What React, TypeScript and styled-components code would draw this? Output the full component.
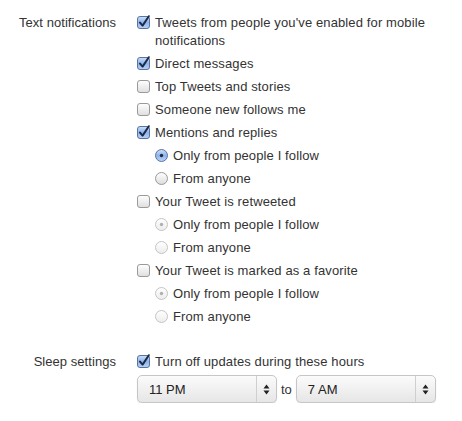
import React from "react";
import styled, { createGlobalStyle } from "styled-components";

const GlobalStyle = createGlobalStyle`
  html, body {
    margin: 0;
    padding: 0;
    background: #ffffff;
  }
  body {
    font-family: "Liberation Sans", Arial, Helvetica, sans-serif;
    font-size: 13px;
    color: #333333;
  }
`;

const Page = styled.div`
  width: 462px;
  padding-top: 14px;
`;

const Section = styled.div<{ $top?: number }>`
  display: grid;
  grid-template-columns: 116px 1fr;
  column-gap: 21px;
  margin-top: ${(p) => p.$top || 0}px;
`;

const Label = styled.div`
  text-align: right;
  line-height: 18px;
  color: #333333;
  letter-spacing: 0.05px;
`;

const List = styled.div`
  display: flex;
  flex-direction: column;
  gap: 5px;
`;

const Row = styled.label<{ $indent?: boolean }>`
  display: flex;
  align-items: flex-start;
  gap: 5px;
  line-height: 18px;
  padding-left: ${(p) => (p.$indent ? 18 : 0)}px;
  padding-right: 10px;
`;

const Mark = styled.span`
  flex: none;
  width: 13px;
  height: 13px;
  margin-top: 2px;
  display: block;
`;

function Checkbox({ checked }: { checked?: boolean }) {
  return (
    <Mark>
      <svg width="14" height="14" viewBox="0 0 14 14" style={{ overflow: "visible" }}>
        <defs>
          <linearGradient id="cbOff" x1="0" y1="0" x2="0" y2="1">
            <stop offset="0" stopColor="#ffffff" />
            <stop offset="1" stopColor="#dedede" />
          </linearGradient>
          <linearGradient id="cbOn" x1="0" y1="0" x2="0" y2="1">
            <stop offset="0" stopColor="#cfe0f7" />
            <stop offset="0.5" stopColor="#8fb4ec" />
            <stop offset="1" stopColor="#b9d3f6" />
          </linearGradient>
        </defs>
        <rect
          x="0.5"
          y="0.5"
          width="12"
          height="12"
          rx="2.5"
          fill={checked ? "url(#cbOn)" : "url(#cbOff)"}
          stroke={checked ? "#5a74a0" : "#9a9a9a"}
        />
        {checked && (
          <path
            d="M3 6.6 L5.6 9.6 L11.8 0.2"
            fill="none"
            stroke="#1c2b4a"
            strokeWidth="2"
            strokeLinecap="round"
            strokeLinejoin="round"
          />
        )}
      </svg>
    </Mark>
  );
}

function Radio({ checked, disabled }: { checked?: boolean; disabled?: boolean }) {
  const on = checked && !disabled;
  return (
    <Mark>
      <svg width="13" height="13" viewBox="0 0 13 13">
        <defs>
          <linearGradient id="rdOff" x1="0" y1="0" x2="0" y2="1">
            <stop offset="0" stopColor="#ffffff" />
            <stop offset="1" stopColor="#dcdcdc" />
          </linearGradient>
          <linearGradient id="rdOn" x1="0" y1="0" x2="0" y2="1">
            <stop offset="0" stopColor="#d3e3f8" />
            <stop offset="0.5" stopColor="#8fb4ec" />
            <stop offset="1" stopColor="#bcd5f6" />
          </linearGradient>
          <linearGradient id="rdDis" x1="0" y1="0" x2="0" y2="1">
            <stop offset="0" stopColor="#ffffff" />
            <stop offset="1" stopColor="#ececec" />
          </linearGradient>
        </defs>
        <circle
          cx="6.5"
          cy="6.5"
          r="6"
          fill={on ? "url(#rdOn)" : disabled ? "url(#rdDis)" : "url(#rdOff)"}
          stroke={on ? "#5a74a0" : disabled ? "#c4c4c4" : "#9a9a9a"}
        />
        {checked && (
          <circle cx="6.5" cy="6.5" r="1.7" fill={disabled ? "#b0b0b0" : "#1c2b4a"} />
        )}
      </svg>
    </Mark>
  );
}

const Text = styled.span`
  color: #333333;
  letter-spacing: 0.12px;
`;

const Selects = styled.div`
  display: flex;
  align-items: center;
  gap: 4px;
  margin-top: 4px;
`;

const Select = styled.div`
  position: relative;
  width: 140px;
  height: 28px;
  box-sizing: border-box;
  border: 1px solid #c6c6c6;
  border-radius: 5px;
  background: linear-gradient(#fbfbfb, #e6e6e6);
  box-shadow: 0 1px 1px rgba(0, 0, 0, 0.12);
  display: flex;
  align-items: center;
`;

const SelectValue = styled.span`
  flex: 1;
  padding-left: 11px;
  color: #222222;
`;

const SelectArrows = styled.span`
  width: 19px;
  height: 100%;
  border-left: 1px solid #cfcfcf;
  display: flex;
  align-items: center;
  justify-content: center;
`;

const To = styled.span`
  color: #333333;
`;

function Dropdown({ value }: { value: string }) {
  return (
    <Select>
      <SelectValue>{value}</SelectValue>
      <SelectArrows>
        <svg width="7" height="11" viewBox="0 0 7 11">
          <path d="M3.5 0.5 L6.5 4.5 L0.5 4.5 Z" fill="#222" />
          <path d="M3.5 10.5 L6.5 6.5 L0.5 6.5 Z" fill="#222" />
        </svg>
      </SelectArrows>
    </Select>
  );
}

export default function App() {
  return (
    <Page>
      <GlobalStyle />
      <Section>
        <Label>Text notifications</Label>
        <List>
          <Row>
            <Checkbox checked />
            <Text>Tweets from people you've enabled for mobile notifications</Text>
          </Row>
          <Row>
            <Checkbox checked />
            <Text>Direct messages</Text>
          </Row>
          <Row>
            <Checkbox />
            <Text>Top Tweets and stories</Text>
          </Row>
          <Row>
            <Checkbox />
            <Text>Someone new follows me</Text>
          </Row>
          <Row>
            <Checkbox checked />
            <Text>Mentions and replies</Text>
          </Row>
          <Row $indent>
            <Radio checked />
            <Text>Only from people I follow</Text>
          </Row>
          <Row $indent>
            <Radio />
            <Text>From anyone</Text>
          </Row>
          <Row>
            <Checkbox />
            <Text>Your Tweet is retweeted</Text>
          </Row>
          <Row $indent>
            <Radio checked disabled />
            <Text>Only from people I follow</Text>
          </Row>
          <Row $indent>
            <Radio disabled />
            <Text>From anyone</Text>
          </Row>
          <Row>
            <Checkbox />
            <Text>Your Tweet is marked as a favorite</Text>
          </Row>
          <Row $indent>
            <Radio checked disabled />
            <Text>Only from people I follow</Text>
          </Row>
          <Row $indent>
            <Radio disabled />
            <Text>From anyone</Text>
          </Row>
        </List>
      </Section>
      <Section $top={27}>
        <Label>Sleep settings</Label>
        <div>
          <Row>
            <Checkbox checked />
            <Text>Turn off updates during these hours</Text>
          </Row>
          <Selects>
            <Dropdown value="11 PM" />
            <To>to</To>
            <Dropdown value="7 AM" />
          </Selects>
        </div>
      </Section>
    </Page>
  );
}
